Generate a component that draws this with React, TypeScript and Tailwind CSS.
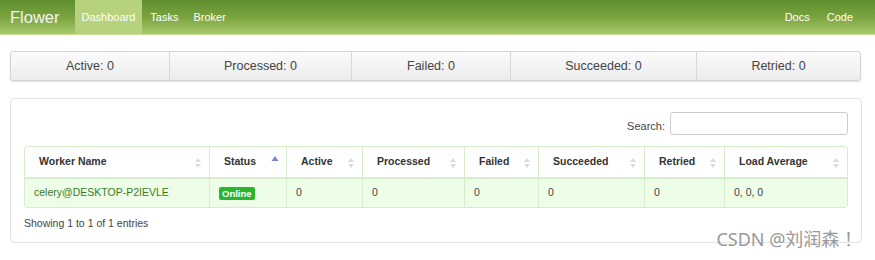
import { ReactNode } from "react";

const STATS = [
  { label: "Active: 0", w: "w-[159px]" },
  { label: "Processed: 0", w: "w-[182px]" },
  { label: "Failed: 0", w: "w-[159px]" },
  { label: "Succeeded: 0", w: "w-[186px]" },
  { label: "Retried: 0", w: "flex-1" },
];

const COLS = [
  { name: "Worker Name", w: "w-[185px]", sort: "both" },
  { name: "Status", w: "w-[77px]", sort: "asc" },
  { name: "Active", w: "w-[76px]", sort: "both" },
  { name: "Processed", w: "w-[102px]", sort: "both" },
  { name: "Failed", w: "w-[74px]", sort: "both" },
  { name: "Succeeded", w: "w-[106px]", sort: "both" },
  { name: "Retried", w: "w-[80px]", sort: "both" },
  { name: "Load Average", w: "flex-1", sort: "both" },
];

function SortIcon({ kind }: { kind: string }) {
  if (kind === "asc") {
    return (
      <svg width="8" height="10" viewBox="0 0 8 10" className="absolute right-[7px] top-[8px]">
        <path d="M4 1 L7.5 6 L0.5 6 Z" fill="#7b7fd6" />
      </svg>
    );
  }
  return (
    <svg width="8" height="12" viewBox="0 0 8 12" className="absolute right-[7px] top-[10px]">
      <path d="M4 1 L7 5 L1 5 Z" fill="#dcdcdc" />
      <path d="M4 11 L7 7 L1 7 Z" fill="#dcdcdc" />
    </svg>
  );
}

function Cell({ w, children, cls = "" }: { w: string; children: ReactNode; cls?: string }) {
  return <div className={`${w} ${cls} relative border-r border-[#d6edcc] last:border-r-0 px-[9px] flex items-center`}>{children}</div>;
}

export default function App() {
  return (
    <div className="w-[875px] h-[260px] bg-white overflow-hidden relative text-[#333] font-['Liberation_Sans',Arial,sans-serif]">
      {/* navbar */}
      <div className="h-[35px] flex items-stretch bg-gradient-to-b from-[#5e8d2f] via-[#7aa43f] to-[#a8c86b] border-b border-[#c8de98]">
        <div className="pl-[10px] pr-[15px] flex items-center text-[16.5px] text-[#f4f4f4]">Flower</div>
        <div className="px-[7px] flex items-center bg-[#b6d27c] text-[11px] text-white">Dashboard</div>
        <div className="pl-[8px] pr-[7px] flex items-center text-[11px] text-white">Tasks</div>
        <div className="px-[8px] flex items-center text-[11px] text-white">Broker</div>
        <div className="flex-1" />
        <div className="px-[8px] flex items-center text-[11px] text-white">Docs</div>
        <div className="pl-[9px] pr-[22px] flex items-center text-[11px] text-white">Code</div>
      </div>

      {/* counters */}
      <div className="ml-[10px] mr-[14px] mt-[16px] h-[30px] flex rounded-[3px] border border-[#d4d4d4] bg-gradient-to-b from-[#fbfbfb] to-[#ececec] shadow-[0_1px_2px_rgba(0,0,0,0.12)]">
        {STATS.map((s) => (
          <div key={s.label} className={`${s.w} flex items-center justify-center text-[12.5px] text-[#444] border-r border-[#d8d8d8] last:border-r-0`}>
            {s.label}
          </div>
        ))}
      </div>

      {/* workers panel */}
      <div className="ml-[10px] mr-[13px] mt-[17px] h-[145px] rounded-[4px] border border-[#e3e3e3] px-[13px] pt-[13px]">
        <div className="flex justify-end items-center gap-[5px]">
          <span className="text-[11px] text-[#444] mt-[5px]">Search:</span>
          <div className="w-[178px] h-[23px] rounded-[3px] border border-[#cccccc] bg-white" />
        </div>

        <div className="mt-[11px] rounded-[3px] border border-[#d6edcc]">
          <div className="h-[32px] flex text-[10.5px] font-bold text-[#333] border-b-2 border-[#d6edcc]">
            {COLS.map((c) => (
              <Cell key={c.name} w={c.w} cls="pl-[14px]">
                {c.name}
                <SortIcon kind={c.sort} />
              </Cell>
            ))}
          </div>
          <div className="h-[28px] flex text-[10.5px] bg-[#eefde8] text-[#444]">
            <Cell w="w-[185px]"><span className="text-[#3d7a1f]">celery@DESKTOP-P2IEVLE</span></Cell>
            <Cell w="w-[77px]">
              <span className="bg-[#28b62c] text-white text-[9.5px] font-bold px-[3px] leading-[13px] rounded-[2px]">Online</span>
            </Cell>
            <Cell w="w-[76px]">0</Cell>
            <Cell w="w-[102px]">0</Cell>
            <Cell w="w-[74px]">0</Cell>
            <Cell w="w-[106px]">0</Cell>
            <Cell w="w-[80px]">0</Cell>
            <Cell w="flex-1">0, 0, 0</Cell>
          </div>
        </div>

        <div className="mt-[8px] text-[10.5px] text-[#444]">Showing 1 to 1 of 1 entries</div>
      </div>

      {/* watermark */}
      <div className="absolute right-[13px] bottom-[7px] text-[18px] text-[#999] font-['Noto_Sans','Noto_Sans_CJK_SC',sans-serif]">
        CSDN @刘润森 ！
      </div>
    </div>
  );
}
